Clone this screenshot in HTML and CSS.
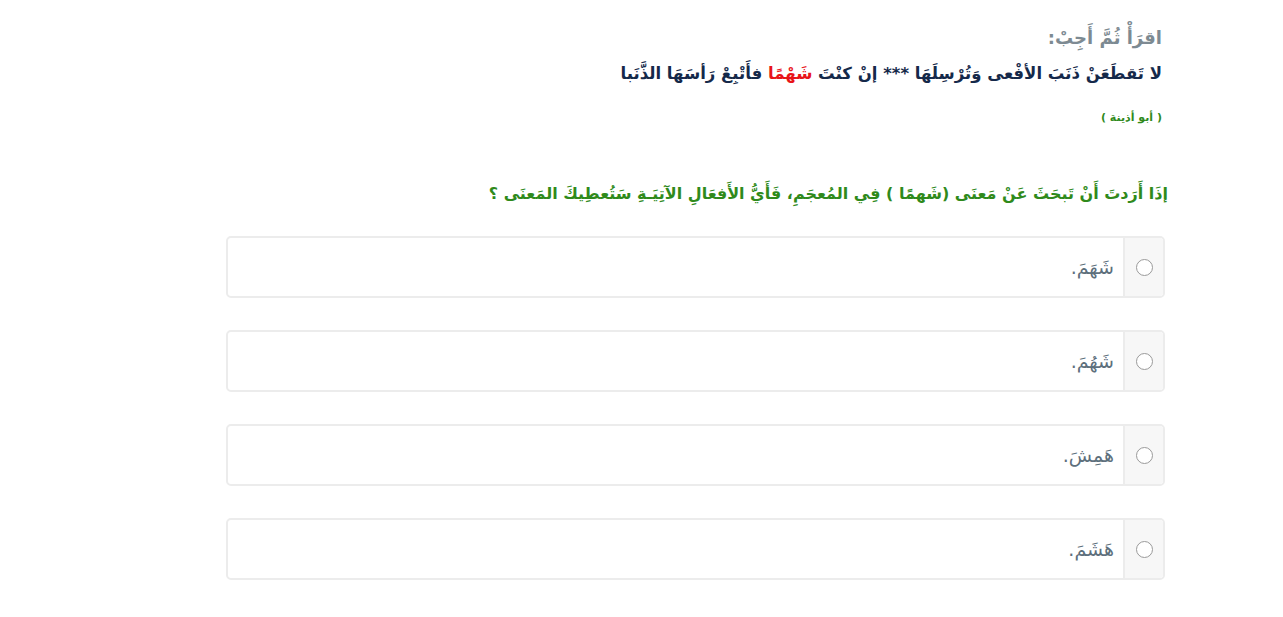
FILE: index.html
```html
<!DOCTYPE html>
<html lang="ar" dir="rtl">
<head>
<meta charset="utf-8">
<link rel="stylesheet" href="styles.css">
</head>
<body>
<main class="page">
  <section class="passage">
    <h2 class="title">اقرَأْ ثُمَّ أَجِبْ:</h2>
    <p class="verse">لا تَقطَعَنْ ذَنَبَ الأفْعى وَتُرْسِلَهَا *** إنْ كنْتَ <span class="red">شَهْمًا</span> فأَتْبِعْ رَأسَهَا الذَّنَبا</p>
    <p class="poet">( أبو أذينة )</p>
  </section>
  <p class="question">إذَا أَرَدتَ أَنْ تَبحَثَ عَنْ مَعنَى (شَهمًا ) فِي المُعجَمِ، فَأَيُّ الأَفعَالِ الآتِيَـةِ سَتُعطِيكَ المَعنَى ؟</p>
  <ul class="options">
    <li class="option"><span class="radio-cell"><span class="radio"></span></span><span class="label">شَهَمَ.</span></li>
    <li class="option"><span class="radio-cell"><span class="radio"></span></span><span class="label">شَهُمَ.</span></li>
    <li class="option"><span class="radio-cell"><span class="radio"></span></span><span class="label">هَمِشَ.</span></li>
    <li class="option"><span class="radio-cell"><span class="radio"></span></span><span class="label">هَشَمَ.</span></li>
  </ul>
</main>
</body>
</html>
```

FILE: styles.css
```css
* { box-sizing: border-box; }
html, body { margin: 0; padding: 0; background: #fff; }
body {
  font-family: "DejaVu Sans", "Noto Sans", sans-serif;
  direction: rtl;
}
.page {
  padding: 22px 118px 0 0;
  width: 1283px;
}
.passage { padding-right: 3px; }
.title {
  margin: 0;
  font-size: 18px;
  font-weight: bold;
  color: #7d8a92;
  line-height: 32px;
}
.verse {
  margin: 0;
  font-size: 16.5px;
  font-weight: bold;
  color: #15294a;
  line-height: 40px;
}
.red { color: #e8141a; }
.poet {
  margin: 14px 0 0;
  font-size: 11px;
  font-weight: bold;
  color: #2f8a1b;
  line-height: 20px;
}
.question {
  margin: 50px -3px 0 0;
  font-size: 16px;
  font-weight: bold;
  color: #2f8a1b;
  line-height: 32px;
}
.options {
  list-style: none;
  margin: 26px 0 0;
  padding: 0;
  width: 939px;
  display: flex;
  flex-direction: column;
  gap: 32px;
}
.option {
  display: flex;
  height: 62px;
  border: 2px solid #ececec;
  border-radius: 5px;
  overflow: hidden;
}
.radio-cell {
  width: 40px;
  flex: none;
  background: #f7f7f7;
  border-left: 2px solid #ececec;
  display: flex;
  align-items: center;
  justify-content: center;
}
.radio {
  width: 17px;
  height: 17px;
  border: 1px solid #9a9a9a;
  border-radius: 50%;
  background: #fff;
}
.label {
  padding-right: 9px;
  display: flex;
  align-items: center;
  font-size: 19px;
  color: #5d6f7c;
}
```
